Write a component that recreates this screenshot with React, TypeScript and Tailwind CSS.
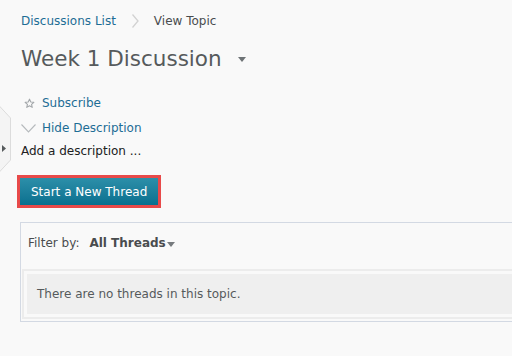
import React from 'react';

function Caret({ className }: { className?: string }) {
    return (
        <svg className={className} width="8" height="5" viewBox="0 0 8 5">
            <path d="M0 0h8L4 5z" fill="currentColor" />
        </svg>
    );
}

export default function App() {
    return (
        <div
            className="relative w-[512px] h-[356px] overflow-hidden bg-[#f9f9f9] text-[#494c4e]"
            style={{ fontFamily: '"DejaVu Sans", sans-serif' }}
        >
            {/* side tab */}
            <svg className="absolute left-0 top-[104px]" width="12" height="70" viewBox="0 0 12 70">
                <path d="M-2 0.5 L10.5 14 V56 L-2 69.5" fill="#f4f4f4" stroke="#dcdcdc" />
                <path d="M2 41 L6 44.5 L2 48 z" fill="#565a5c" />
            </svg>

            <div className="pl-[21px] pt-[13px]">
                <div className="flex items-center h-[16px] text-[12px]">
                    <span className="text-[#1d6d95]">Discussions List</span>
                    <svg className="ml-[16px] mr-[15px]" width="7" height="14" viewBox="0 0 7 14">
                        <path d="M0.5 0.5 L6 7 L0.5 13.5" fill="none" stroke="#d2d2d2" strokeWidth="1.3" />
                    </svg>
                    <span>View Topic</span>
                </div>

                <div className="flex items-center mt-[17px] h-[26px]">
                    <h1 className="text-[21.5px] leading-[26px] text-[#565a5c] font-normal">Week 1 Discussion</h1>
                    <Caret className="ml-[16px] text-[#6e7376]" />
                </div>

                <div className="mt-[22px] flex items-center h-[18px] text-[12px]">
                    <svg className="ml-[3px] mr-[7px]" width="11" height="11" viewBox="0 0 24 24">
                        <path
                            d="M12 2.5l2.9 6.2 6.6.7-5 4.5 1.4 6.6L12 17.1l-5.9 3.4 1.4-6.6-5-4.5 6.6-.7z"
                            fill="none"
                            stroke="#a3a7aa"
                            strokeWidth="2.4"
                            strokeLinejoin="round"
                        />
                    </svg>
                    <span className="text-[#1d6d95]">Subscribe</span>
                </div>

                <div className="mt-[7px] flex items-center h-[18px] text-[12px]">
                    <svg className="mr-[6px]" width="15" height="9" viewBox="0 0 15 9">
                        <path d="M0.5 0.5 L7.5 8 L14.5 0.5" fill="none" stroke="#b5b9bc" strokeWidth="1.1" />
                    </svg>
                    <span className="text-[#1d6d95]">Hide Description</span>
                </div>

                <div className="mt-[5px] text-[12px] leading-[18px] text-[#202122]">Add a description ...</div>

                <div className="mt-[15px] ml-[-4px] inline-block border-[3px] border-[#e84a4a]">
                    <button className="block h-[27px] px-[11px] text-[12px] text-white bg-gradient-to-b from-[#2c8fa9] to-[#08708f]">
                        Start a New Thread
                    </button>
                </div>

                <div className="mt-[14px] ml-[-1px] w-[520px] border border-[#d3d9e3] px-px pb-[2px]">
                    <div className="flex items-center h-[46px] pt-[13px] pb-[19px] pl-[6px] text-[12px] leading-[14px]">
                        <span>Filter by:</span>
                        <span className="ml-[10px] font-bold text-[#494c4e]">All Threads</span>
                        <Caret className="ml-[1px] mt-[2px] text-[#777b7e]" />
                    </div>
                    <div className="border-2 border-[#ececec] p-[3px]">
                        <div className="h-[40px] bg-[#efefef] flex items-center pl-[10px] text-[12px] text-[#565a5c]">
                            There are no threads in this topic.
                        </div>
                    </div>
                </div>
            </div>
        </div>
    );
}
